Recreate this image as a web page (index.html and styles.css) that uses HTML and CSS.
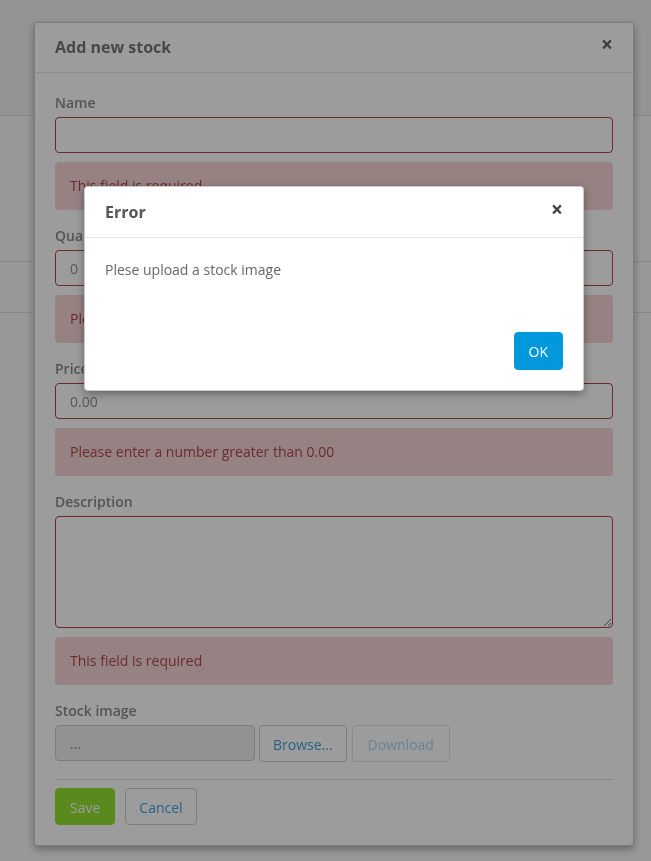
FILE: index.html
```html
<!DOCTYPE html>
<html>
<head>
<meta charset="utf-8">
<title>Add new stock</title>
<link rel="stylesheet" href="styles.css">
</head>
<body>
<div class="page">
  <div class="navbar"></div>
  <div class="list">
    <div class="list-row"></div>
  </div>
</div>

<div class="stock-layer">
  <div class="modal stock-modal">
    <div class="modal-header">
      <h4 class="modal-title">Add new stock</h4>
      <span class="close">&times;</span>
    </div>
    <div class="modal-body">
      <form>
        <div class="form-group">
          <label>Name</label>
          <input class="form-control invalid" type="text" value="">
          <div class="alert">This field is required</div>
        </div>
        <div class="form-group">
          <label>Quantity</label>
          <input class="form-control invalid" type="text" value="0">
          <div class="alert">Please enter a number greater than 0</div>
        </div>
        <div class="form-group">
          <label>Price</label>
          <input class="form-control invalid" type="text" value="0.00">
          <div class="alert">Please enter a number greater than 0.00</div>
        </div>
        <div class="form-group">
          <label>Description</label>
          <textarea class="form-control invalid textarea"></textarea>
          <div class="alert">This field is required</div>
        </div>
        <div class="form-group last">
          <label>Stock image</label>
          <div class="file-row">
            <input class="form-control file-name" type="text" value="..." readonly>
            <button type="button" class="btn btn-default">Browse...</button>
            <button type="button" class="btn btn-default btn-download" disabled>Download</button>
          </div>
        </div>
        <hr class="divider">
        <div class="actions">
          <button type="button" class="btn btn-success">Save</button>
          <button type="button" class="btn btn-default">Cancel</button>
        </div>
      </form>
    </div>
  </div>
</div>

<div class="backdrop"></div>

<div class="error-layer">
  <div class="modal error-modal">
    <div class="modal-header">
      <h4 class="modal-title">Error</h4>
      <span class="close">&times;</span>
    </div>
    <div class="modal-body error-body">Plese upload a stock image</div>
    <div class="modal-footer">
      <button type="button" class="btn btn-primary">OK</button>
    </div>
  </div>
</div>
</body>
</html>
```

FILE: styles.css
```css
* { box-sizing: border-box; }
html, body { margin: 0; height: 100%; }
body {
  font-family: "Open Sans", "Liberation Sans", sans-serif;
  font-size: 14px;
  line-height: 20px;
  color: #555;
  background: #f8f8f8;
  overflow: hidden;
}

.navbar {
  height: 116px;
  background: #f2f2f2;
  border-bottom: 1px solid #dcdcdc;
}
.list {
  margin-top: 145px;
  border-top: 1px solid #dcdcdc;
}
.list-row {
  height: 51px;
  border-bottom: 1px solid #dcdcdc;
}

.stock-layer {
  position: fixed;
  inset: 0;
  padding: 22px 0 0 34px;
}
.modal {
  background: #fff;
  border: 1px solid rgba(0, 0, 0, .2);
  border-radius: 4px;
  box-shadow: 0 3px 9px rgba(0, 0, 0, .35);
}
.stock-modal { width: 600px; }

.modal-header {
  display: flex;
  justify-content: space-between;
  align-items: flex-start;
  padding: 15px 20px;
  border-bottom: 1px solid #e5e5e5;
}
.modal-title {
  margin: 0;
  font-size: 16px;
  font-weight: 700;
  line-height: 19px;
  color: #777;
}
.close {
  font-size: 21px;
  font-weight: 700;
  line-height: 21px;
  margin-top: -4px;
  color: #666;
}
.modal-body { padding: 19px 20px 20px; }

.form-group { margin-bottom: 15px; }
.form-group.last { margin-bottom: 0; }
label {
  display: block;
  font-weight: 600;
  line-height: 20px;
  padding-top: 1px;
  margin-bottom: 4px;
  color: #8a8a8a;
}
.form-control {
  display: block;
  width: 100%;
  height: 36px;
  margin: 0;
  padding: 6px 14px;
  font: inherit;
  color: #8e8e8e;
  background: #fff;
  border: 1px solid #ccc;
  border-radius: 4px;
}
.invalid { border-color: #b04646; }
.textarea { height: 112px; resize: vertical; }

.alert {
  margin-top: 9px;
  padding: 15px;
  line-height: 18px;
  background: #f5d4d4;
  color: #ad4848;
  border-radius: 4px;
}

.file-row {
  display: flex;
  align-items: flex-start;
  gap: 4px;
}
.file-name {
  width: 200px;
  background: #efefef;
}
.btn {
  display: inline-block;
  height: 37px;
  margin: 0;
  padding: 9px 13px 7px;
  font: inherit;
  line-height: 19px;
  border: 1px solid #ccc;
  border-radius: 4px;
  background: #fff;
  cursor: pointer;
  white-space: nowrap;
}
.btn-default { color: #3fa2dc; }
.btn-download { margin-left: 1px; padding: 9px 15px 7px; }
.btn-default:disabled { color: #a8d5f2; border-color: #e2e2e2; }

.divider {
  margin: 17px 0 8px;
  border: 0;
  border-top: 1px solid #ddd;
}
.actions { display: flex; gap: 10px; }
.btn-success {
  padding: 9px 14px 7px;
  background: #93e030;
  border-color: #93e030;
  color: #fff;
}

.backdrop {
  position: fixed;
  inset: 0;
  background: rgba(0, 0, 0, .39);
}

.error-layer {
  position: fixed;
  inset: 0;
  padding: 186px 0 0 84px;
}
.error-modal { width: 500px; }
.error-modal .modal-title { line-height: 20px; color: #555; }
.error-modal .close { color: #444; margin-top: -3px; }
.error-body {
  padding: 22px 20px 30px;
  color: #666;
}
.modal-footer {
  display: flex;
  justify-content: flex-end;
  padding: 22px 20px 20px;
}
.btn-primary {
  height: 38px;
  padding: 9px 14px;
  line-height: 20px;
  background: #0398db;
  border-color: #0398db;
  color: #fff;
}
```
